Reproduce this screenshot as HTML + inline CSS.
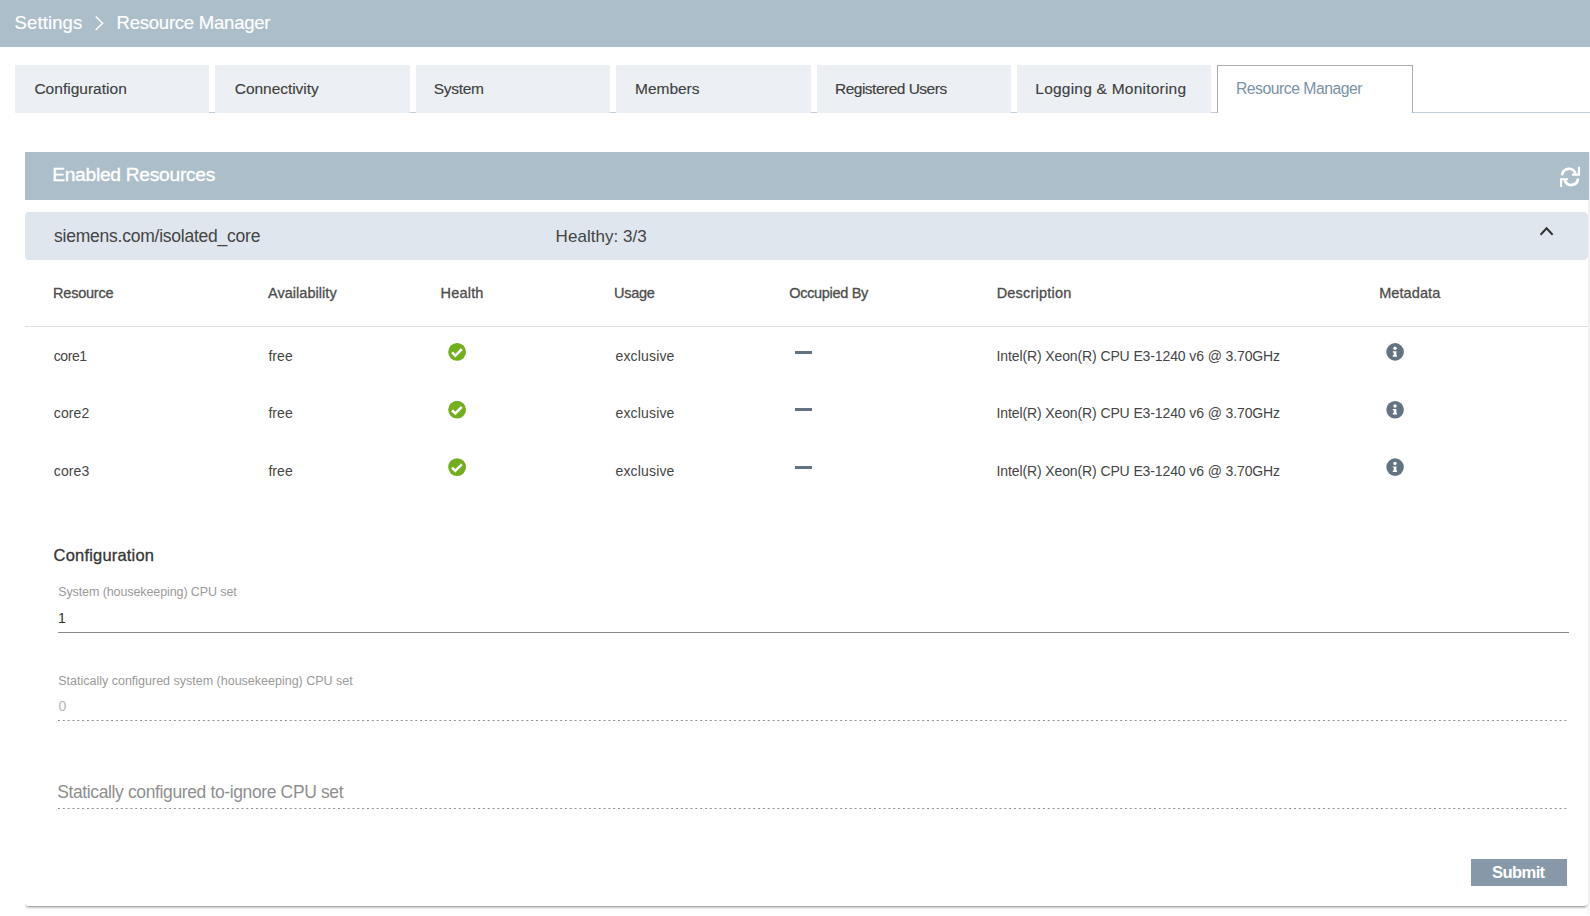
<!DOCTYPE html>
<html><head><meta charset="utf-8"><title>Resource Manager</title>
<style>
html,body{margin:0;padding:0;width:1590px;height:916px;overflow:hidden;background:#fff;}
body{position:relative;font-family:"Liberation Sans", sans-serif;}
.t{position:absolute;line-height:1;white-space:nowrap;}
.abs{position:absolute;}
.hdr{left:0;top:0;width:1590px;height:47px;background:#adbecb;}
.tab{position:absolute;top:65px;height:48px;background:#ecf0f4;}
.tabline{left:15px;top:112px;width:1575px;height:1px;background:#c2ced8;}
.active{position:absolute;left:1217px;top:65px;width:194px;height:47px;border:1px solid #a9adb1;border-bottom:none;background:#fff;}
.card{left:25px;top:152px;width:1563px;height:754px;background:#fff;border-radius:0 0 4px 4px;box-shadow:0 3px 1px -2px rgba(0,0,0,.2),0 2px 2px 0 rgba(0,0,0,.14),0 1px 5px 0 rgba(0,0,0,.12);clip-path:inset(0 -10px -10px 0);}
.rline{left:1588px;top:200px;width:1px;height:714px;background:#efefef;}
.chdr{left:25px;top:152px;width:1564px;height:48px;background:#adbecb;}
.grp{left:25px;top:212px;width:1563px;height:48px;background:#dfe6ee;border-radius:4px;}
.thline{left:25px;top:326px;width:1563px;height:1px;background:#e0e0e0;}
.uline{left:58px;top:632px;width:1511px;height:1px;background:#8c8c8c;}
.dline{left:58px;height:1px;width:1509px;background-image:linear-gradient(to right,#8e8e8e 0,#8e8e8e 40%,transparent 40%);background-size:4.84px 1px;}
.btn{left:1471px;top:859px;width:96px;height:27px;background:#8799a8;}
</style></head><body>
<div class="abs hdr"></div>
<svg class="abs" style="left:93px;top:14px" width="14" height="19" viewBox="0 0 14 19"><path d="M2.7 2.6 L9.6 9.2 L2.7 15.9" fill="none" stroke="#fff" stroke-width="1.4"/></svg>
<div class="abs tabline"></div>
<div class="tab" style="left:15px;width:194px"></div>
<div class="tab" style="left:215px;width:194.5px"></div>
<div class="tab" style="left:415.7px;width:194.3px"></div>
<div class="tab" style="left:616px;width:195px"></div>
<div class="tab" style="left:816.6px;width:194.6px"></div>
<div class="tab" style="left:1017px;width:194.2px"></div>
<div class="active"></div>
<div class="abs card"></div>
<div class="abs rline"></div>
<div class="abs chdr"></div>
<svg class="abs" style="left:1558px;top:164px" width="26" height="26" viewBox="0 0 26 26">
 <path d="M4.26 10.2 A6.85 6.85 0 0 1 17.1 8.6" fill="none" stroke="#fff" stroke-width="2.7" stroke-linecap="round"/>
 <path d="M21 2.84 V10.6 H14.05" fill="none" stroke="#fff" stroke-width="2.1"/>
 <path d="M19.84 15.6 A6.85 6.85 0 0 1 7.0 17.2" fill="none" stroke="#fff" stroke-width="2.7" stroke-linecap="round"/>
 <path d="M3.1 22.96 V15.2 H10.05" fill="none" stroke="#fff" stroke-width="2.1"/>
</svg>
<div class="abs grp"></div>
<svg class="abs" style="left:1538px;top:225px" width="17" height="13" viewBox="0 0 17 13"><path d="M2.6 9.7 L8.6 3.3 L14.6 9.7" fill="none" stroke="#333" stroke-width="2"/></svg>
<div class="abs thline"></div>
<svg class="abs" style="left:447px;top:341px" width="20" height="20" viewBox="0 0 20 20"><circle cx="10.1" cy="10.90" r="8.9" fill="#72ae1e"/><path d="M5.0 11.40 L8.3 14.60 L14.8 8.10" fill="none" stroke="#fff" stroke-width="2.6"/></svg>
<div class="abs" style="left:795px;top:351px;width:17px;height:3px;background:#637382"></div>
<svg class="abs" style="left:1385px;top:341px" width="20" height="20" viewBox="0 0 20 20"><circle cx="10.1" cy="10.90" r="8.8" fill="#637382"/><circle cx="10.0" cy="7.20" r="1.7" fill="#fff"/><path d="M7.8 10.20 H11.4 V14.30 H12.0 V15.80 H7.8 V14.30 H8.75 V11.40 H7.8 Z" fill="#fff"/></svg>
<svg class="abs" style="left:447px;top:399px" width="20" height="20" viewBox="0 0 20 20"><circle cx="10.1" cy="10.70" r="8.9" fill="#72ae1e"/><path d="M5.0 11.20 L8.3 14.40 L14.8 7.90" fill="none" stroke="#fff" stroke-width="2.6"/></svg>
<div class="abs" style="left:795px;top:408px;width:17px;height:3px;background:#637382"></div>
<svg class="abs" style="left:1385px;top:399px" width="20" height="20" viewBox="0 0 20 20"><circle cx="10.1" cy="10.70" r="8.8" fill="#637382"/><circle cx="10.0" cy="7.00" r="1.7" fill="#fff"/><path d="M7.8 10.00 H11.4 V14.10 H12.0 V15.60 H7.8 V14.10 H8.75 V11.20 H7.8 Z" fill="#fff"/></svg>
<svg class="abs" style="left:447px;top:457px" width="20" height="20" viewBox="0 0 20 20"><circle cx="10.1" cy="10.10" r="8.9" fill="#72ae1e"/><path d="M5.0 10.60 L8.3 13.80 L14.8 7.30" fill="none" stroke="#fff" stroke-width="2.6"/></svg>
<div class="abs" style="left:795px;top:466px;width:17px;height:3px;background:#637382"></div>
<svg class="abs" style="left:1385px;top:457px" width="20" height="20" viewBox="0 0 20 20"><circle cx="10.1" cy="10.10" r="8.8" fill="#637382"/><circle cx="10.0" cy="6.40" r="1.7" fill="#fff"/><path d="M7.8 9.40 H11.4 V13.50 H12.0 V15.00 H7.8 V13.50 H8.75 V10.60 H7.8 Z" fill="#fff"/></svg>

<div class="abs uline"></div>
<div class="abs dline" style="top:720px"></div>
<div class="abs dline" style="top:808px"></div>
<div class="abs btn"></div>

<div class='t' style='left:14.60px;top:14.28px;font-size:18.5px;font-weight:400;-webkit-text-stroke:0.15px #ffffff;color:#ffffff;letter-spacing:0.114px'>Settings</div>
<div class='t' style='left:116.50px;top:14.28px;font-size:18.5px;font-weight:400;-webkit-text-stroke:0.15px #ffffff;color:#ffffff;letter-spacing:-0.220px'>Resource Manager</div>
<div class='t' style='left:34.40px;top:80.92px;font-size:15.5px;font-weight:400;-webkit-text-stroke:0.15px #404040;color:#404040;letter-spacing:0.017px'>Configuration</div>
<div class='t' style='left:234.80px;top:80.92px;font-size:15.5px;font-weight:400;-webkit-text-stroke:0.15px #404040;color:#404040;letter-spacing:-0.045px'>Connectivity</div>
<div class='t' style='left:433.70px;top:80.92px;font-size:15.5px;font-weight:400;-webkit-text-stroke:0.15px #404040;color:#404040;letter-spacing:-0.300px'>System</div>
<div class='t' style='left:635.00px;top:80.92px;font-size:15.5px;font-weight:400;-webkit-text-stroke:0.15px #404040;color:#404040;letter-spacing:-0.017px'>Members</div>
<div class='t' style='left:835.00px;top:80.92px;font-size:15.5px;font-weight:400;-webkit-text-stroke:0.15px #404040;color:#404040;letter-spacing:-0.507px'>Registered Users</div>
<div class='t' style='left:1035.30px;top:80.92px;font-size:15.5px;font-weight:400;-webkit-text-stroke:0.15px #404040;color:#404040;letter-spacing:0.226px'>Logging &amp; Monitoring</div>
<div class='t' style='left:1235.90px;top:80.67px;font-size:15.8px;font-weight:400;color:#7a93a6;letter-spacing:-0.507px'>Resource Manager</div>
<div class='t' style='left:52.20px;top:164.68px;font-size:19.2px;font-weight:400;-webkit-text-stroke:0.3px #ffffff;color:#ffffff;letter-spacing:-0.269px'>Enabled Resources</div>
<div class='t' style='left:54.00px;top:228.12px;font-size:17.5px;font-weight:400;color:#444444;letter-spacing:-0.233px'>siemens.com/isolated_core</div>
<div class='t' style='left:555.60px;top:228.35px;font-size:17.0px;font-weight:400;color:#444444;letter-spacing:0.045px'>Healthy: 3/3</div>
<div class='t' style='left:53.10px;top:285.68px;font-size:14.5px;font-weight:400;-webkit-text-stroke:0.3px #4d4d4d;color:#4d4d4d;letter-spacing:-0.243px'>Resource</div>
<div class='t' style='left:268.00px;top:285.68px;font-size:14.5px;font-weight:400;-webkit-text-stroke:0.3px #4d4d4d;color:#4d4d4d;letter-spacing:0.036px'>Availability</div>
<div class='t' style='left:440.60px;top:285.68px;font-size:14.5px;font-weight:400;-webkit-text-stroke:0.3px #4d4d4d;color:#4d4d4d;letter-spacing:0.180px'>Health</div>
<div class='t' style='left:614.10px;top:285.68px;font-size:14.5px;font-weight:400;-webkit-text-stroke:0.3px #4d4d4d;color:#4d4d4d;letter-spacing:-0.275px'>Usage</div>
<div class='t' style='left:789.30px;top:285.68px;font-size:14.5px;font-weight:400;-webkit-text-stroke:0.3px #4d4d4d;color:#4d4d4d;letter-spacing:-0.320px'>Occupied By</div>
<div class='t' style='left:996.70px;top:285.68px;font-size:14.5px;font-weight:400;-webkit-text-stroke:0.3px #4d4d4d;color:#4d4d4d;letter-spacing:0.200px'>Description</div>
<div class='t' style='left:1379.20px;top:285.68px;font-size:14.5px;font-weight:400;-webkit-text-stroke:0.3px #4d4d4d;color:#4d4d4d;letter-spacing:0.086px'>Metadata</div>
<div class='t' style='left:53.80px;top:349.10px;font-size:14.0px;font-weight:400;color:#454545;letter-spacing:-0.450px'>core1</div>
<div class='t' style='left:268.40px;top:349.10px;font-size:14.0px;font-weight:400;color:#454545;letter-spacing:0.067px'>free</div>
<div class='t' style='left:615.50px;top:349.10px;font-size:14.0px;font-weight:400;color:#454545;letter-spacing:0.162px'>exclusive</div>
<div class='t' style='left:996.50px;top:349.10px;font-size:14.0px;font-weight:400;color:#454545;letter-spacing:-0.113px'>Intel(R) Xeon(R) CPU E3-1240 v6 @ 3.70GHz</div>
<div class='t' style='left:53.80px;top:406.10px;font-size:14.0px;font-weight:400;color:#454545;letter-spacing:0.125px'>core2</div>
<div class='t' style='left:268.40px;top:406.10px;font-size:14.0px;font-weight:400;color:#454545;letter-spacing:0.067px'>free</div>
<div class='t' style='left:615.50px;top:406.10px;font-size:14.0px;font-weight:400;color:#454545;letter-spacing:0.162px'>exclusive</div>
<div class='t' style='left:996.50px;top:406.10px;font-size:14.0px;font-weight:400;color:#454545;letter-spacing:-0.113px'>Intel(R) Xeon(R) CPU E3-1240 v6 @ 3.70GHz</div>
<div class='t' style='left:53.80px;top:464.10px;font-size:14.0px;font-weight:400;color:#454545;letter-spacing:0.125px'>core3</div>
<div class='t' style='left:268.40px;top:464.10px;font-size:14.0px;font-weight:400;color:#454545;letter-spacing:0.067px'>free</div>
<div class='t' style='left:615.50px;top:464.10px;font-size:14.0px;font-weight:400;color:#454545;letter-spacing:0.162px'>exclusive</div>
<div class='t' style='left:996.50px;top:464.10px;font-size:14.0px;font-weight:400;color:#454545;letter-spacing:-0.113px'>Intel(R) Xeon(R) CPU E3-1240 v6 @ 3.70GHz</div>
<div class='t' style='left:53.60px;top:546.77px;font-size:16.5px;font-weight:400;-webkit-text-stroke:0.3px #363636;color:#363636;letter-spacing:0.183px'>Configuration</div>
<div class='t' style='left:58.20px;top:585.58px;font-size:12.5px;font-weight:400;color:#9a9a9a;letter-spacing:-0.096px'>System (housekeeping) CPU set</div>
<div class='t' style='left:58.00px;top:611.10px;font-size:14.0px;font-weight:400;color:#333333;letter-spacing:0.000px'>1</div>
<div class='t' style='left:58.20px;top:675.08px;font-size:12.5px;font-weight:400;color:#9a9a9a;letter-spacing:0.000px'>Statically configured system (housekeeping) CPU set</div>
<div class='t' style='left:58.60px;top:699.10px;font-size:14.0px;font-weight:400;color:#b8b8b8;letter-spacing:0.000px'>0</div>
<div class='t' style='left:57.20px;top:784.33px;font-size:17.5px;font-weight:400;color:#8f8f8f;letter-spacing:-0.374px'>Statically configured to-ignore CPU set</div>
<div class='t' style='left:1492.10px;top:864.89px;font-size:16.6px;font-weight:700;color:#ffffff;letter-spacing:-0.640px'>Submit</div>
</body></html>
